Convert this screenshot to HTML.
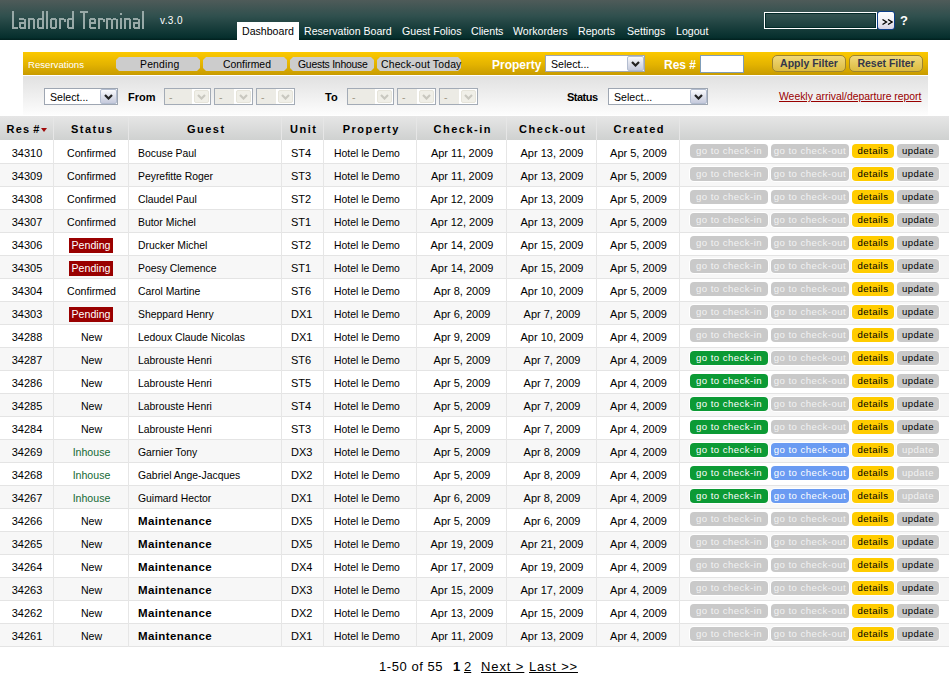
<!DOCTYPE html><html><head><meta charset="utf-8"><style>
*{margin:0;padding:0;box-sizing:border-box}
html,body{width:950px;height:681px;overflow:hidden;background:#fff;font-family:"Liberation Sans",sans-serif;font-size:11px;color:#000}
.a{position:absolute;white-space:nowrap}
#hdr{position:absolute;left:0;top:0;width:950px;height:40px;background:linear-gradient(#4f5b59 0px,#30504e 16px,#143a38 30px,#052e2c 38px,#022321 39px,#022321 40px)}
#logo{position:absolute;left:11px;top:7px;font-size:25px;color:#98a8a6;transform:scaleX(0.68);transform-origin:0 0;letter-spacing:0px}
#ver{position:absolute;left:160px;top:15px;font-size:10px;letter-spacing:0.4px;color:#fff}
.nav{position:absolute;top:24px;font-size:10.6px;color:#fff;line-height:14px}
#tab{position:absolute;left:237px;top:22px;width:62px;height:18px;background:#fff}
#srch{position:absolute;left:764px;top:12px;width:113px;height:17px;border:1px solid #fff;box-shadow:inset 0 0 0 1px #022a28}
#go{position:absolute;left:877px;top:11px;width:18px;height:19px;border:1px solid #0b3d8a;border-radius:3px;background:linear-gradient(#fff,#f4f4f8 40%,#d6d2e4);font-size:10px;font-weight:bold;text-align:center;line-height:20px;color:#000;letter-spacing:0px;text-indent:1px}
#q{position:absolute;left:900px;top:13px;font-size:13px;font-weight:bold;color:#fff}
#ybar{position:absolute;left:23px;top:52px;width:905px;height:23px;background:linear-gradient(#fcc900,#e3b300 55%,#c89b00)}
#fbar{position:absolute;left:23px;top:76px;width:905px;height:39px;background:linear-gradient(#e1e1e1,#fdfdfd)}
.yb{position:absolute;top:57px;height:14px;background:#cccccc;color:#000;font-size:10px;line-height:14px;text-align:center;letter-spacing:0.6px;clip-path:polygon(3px 0,calc(100% - 3px) 0,100% 3px,100% calc(100% - 3px),calc(100% - 3px) 100%,3px 100%,0 calc(100% - 3px),0 3px)}
.ybt{top:58px;font-size:10.4px;line-height:14px;color:#000}
.lbl{position:absolute;font-weight:bold;color:#fff;font-size:12px}
.fb{position:absolute;top:55px;height:17px;border:1px solid #9c8430;border-radius:5px;background:linear-gradient(#f0d87a,#dcbc40);color:#34374a;font-weight:bold;font-size:10.5px;text-align:center;line-height:15px}
.sel{position:absolute;height:17px;border:1px solid #9ea6b2;background:#fff;font-size:10.6px;line-height:17px;padding-left:5px;color:#000}
.sel i{position:absolute;right:0px;top:0px;width:17px;height:15px;border:1px solid #b3bdd0;border-radius:2px;background:linear-gradient(#fbfbfd,#e6e8f0 35%,#c5cadc)}
.sel i svg{position:absolute;left:3px;top:4px}
.sel.d{border-color:#a3abb6;background:linear-gradient(90deg,#ecebe5 0,#ecebe5 calc(100% - 18px),#fff calc(100% - 18px));color:#a09a88;padding-left:4px}
.sel.d i{right:1px;top:1px;width:15px;height:13px;border:1px solid #e6e4da;border-radius:2px;background:#f0efe8}
.sel.d i svg{left:2px;top:3px}
.bl{position:absolute;font-weight:bold;font-size:11px;color:#000}
#thead{position:absolute;left:0;top:116px;width:949px;height:24px;background:linear-gradient(#e6e6e6,#cfd1d0)}
.th{position:absolute;top:122px;font-weight:bold;font-size:11px;text-align:center;letter-spacing:1.5px;line-height:14px;text-indent:1.5px}
.row{position:absolute;left:0;width:949px;height:23px;border-bottom:1px solid #e4e4e4}
.row.o{background:#f7f7f7}
.vd{position:absolute;width:1px;background:#e6e6e6}
.td{position:absolute;line-height:14px}
.c{text-align:center}
.pend{background:#990000;color:#fff;width:44px;height:15px;text-align:center;line-height:15px;font-size:10.6px}
.nm{font-size:10.4px;margin-top:1px}
.st{font-size:10.6px}
.inh{color:#156a35}
.btn{position:absolute;height:14px;line-height:14px;font-size:9.6px;text-align:center;letter-spacing:0.45px;border-radius:4px;white-space:nowrap;overflow:hidden;box-shadow:0 0 0 1px #fff}
.bg{background:#c9c9c9;color:#f2f2f2}
.bG{background:#0c9a35;color:#fff}
.bB{background:#6a9bf2;color:#fff}
.bY{background:#ffcc00;color:#000}
.bU{background:#c9c9c9;color:#000}
.pg{top:659px;text-underline-offset:1px;font-size:13px;line-height:16px}
</style></head><body>
<div id="hdr"></div>
<svg class="a" style="left:0;top:0" width="150" height="40" shape-rendering="crispEdges"><g fill="#98a9a7"><rect x="12" y="11" width="2" height="18"/><rect x="12" y="27" width="6" height="2"/><rect x="19" y="18" width="5" height="2"/><rect x="24" y="19" width="2" height="10"/><rect x="19" y="22" width="5" height="2"/><rect x="19" y="24" width="2" height="4"/><rect x="20" y="27" width="4" height="2"/><rect x="28" y="18" width="2" height="11"/><rect x="30" y="18" width="4" height="2"/><rect x="33" y="19" width="2" height="10"/><rect x="42" y="11" width="2" height="18"/><rect x="37" y="19" width="2" height="9"/><rect x="38" y="18" width="4" height="2"/><rect x="38" y="27" width="4" height="2"/><rect x="46" y="11" width="2" height="18"/><rect x="50" y="19" width="2" height="9"/><rect x="55" y="19" width="2" height="9"/><rect x="51" y="18" width="5" height="2"/><rect x="51" y="27" width="5" height="2"/><rect x="59" y="18" width="2" height="11"/><rect x="61" y="18" width="3" height="2"/><rect x="64" y="19" width="2" height="3"/><rect x="72" y="11" width="2" height="18"/><rect x="67" y="19" width="2" height="9"/><rect x="68" y="18" width="4" height="2"/><rect x="68" y="27" width="4" height="2"/><rect x="80" y="11" width="8" height="2"/><rect x="83" y="11" width="2" height="18"/><rect x="89" y="19" width="2" height="9"/><rect x="90" y="18" width="5" height="2"/><rect x="94" y="19" width="2" height="5"/><rect x="90" y="22" width="5" height="2"/><rect x="90" y="27" width="6" height="2"/><rect x="98" y="18" width="2" height="11"/><rect x="100" y="18" width="3" height="2"/><rect x="103" y="19" width="2" height="3"/><rect x="106" y="18" width="2" height="11"/><rect x="108" y="18" width="3" height="2"/><rect x="111" y="19" width="2" height="10"/><rect x="113" y="18" width="3" height="2"/><rect x="116" y="19" width="2" height="10"/><rect x="120" y="13" width="2" height="2"/><rect x="120" y="18" width="2" height="11"/><rect x="124" y="18" width="2" height="11"/><rect x="126" y="18" width="4" height="2"/><rect x="129" y="19" width="2" height="10"/><rect x="133" y="18" width="5" height="2"/><rect x="138" y="19" width="2" height="10"/><rect x="133" y="22" width="5" height="2"/><rect x="133" y="24" width="2" height="4"/><rect x="134" y="27" width="4" height="2"/><rect x="142" y="11" width="2" height="18"/></g></svg>
<div id="ver" class="a">v.3.0</div>
<div id="tab"></div>
<div class="nav a" style="left:242px;color:#000">Dashboard</div>
<div class="nav a" style="left:304px;color:#fff">Reservation Board</div>
<div class="nav a" style="left:402px;color:#fff">Guest Folios</div>
<div class="nav a" style="left:471px;color:#fff">Clients</div>
<div class="nav a" style="left:513px;color:#fff">Workorders</div>
<div class="nav a" style="left:578px;color:#fff">Reports</div>
<div class="nav a" style="left:627px;color:#fff">Settings</div>
<div class="nav a" style="left:676px;color:#fff">Logout</div>
<div id="srch"></div><div id="go"><svg style="position:absolute;left:4px;top:7px" width="11" height="6" viewBox="0 0 11 6"><path d="M0.5 0.5 L4.5 3 L0.5 5.5 M6 0.5 L10 3 L6 5.5" fill="none" stroke="#000" stroke-width="1.3"/></svg></div><div id="q" class="a">?</div>
<div id="ybar"></div><div id="fbar"></div>
<div class="a" style="left:28px;top:59px;color:#fff;font-size:9.6px">Reservations</div>
<div class="yb" style="left:116px;width:84px"></div>
<div class="a ybt" style="left:140px;letter-spacing:0.2px">Pending</div>
<div class="yb" style="left:203px;width:84px"></div>
<div class="a ybt" style="left:223px;letter-spacing:0px">Confirmed</div>
<div class="yb" style="left:290px;width:84px"></div>
<div class="a ybt" style="left:298px;letter-spacing:-0.23px">Guests Inhouse</div>
<div class="yb" style="left:377px;width:84px"></div>
<div class="a ybt" style="left:381px;letter-spacing:0.18px">Check-out Today</div>
<div class="lbl a" style="left:492px;top:58px">Property</div>
<div class="sel" style="left:545px;top:55px;width:100px">Select...<i><svg width="9" height="6" viewBox="0 0 9 6"><path d="M1 1 L4.5 4.5 L8 1" fill="none" stroke="#222" stroke-width="2.2"/></svg></i></div>
<div class="lbl a" style="left:664px;top:58px">Res #</div>
<div class="a" style="left:700px;top:55px;width:44px;height:18px;background:#fff;border:1px solid #7f9db9"></div>
<div class="fb" style="left:772px;width:74px">Apply Filter</div>
<div class="fb" style="left:849px;width:74px">Reset Filter</div>
<div class="sel" style="left:44px;top:88px;width:74px">Select...<i><svg width="9" height="6" viewBox="0 0 9 6"><path d="M1 1 L4.5 4.5 L8 1" fill="none" stroke="#222" stroke-width="2.2"/></svg></i></div>
<div class="bl a" style="left:128px;top:91px">From</div>
<div class="sel d" style="left:164px;top:88px;width:47px">-<i><svg width="9" height="6" viewBox="0 0 9 6"><path d="M1 1 L4.5 4.5 L8 1" fill="none" stroke="#c9c8c0" stroke-width="2.2"/></svg></i></div>
<div class="sel d" style="left:214px;top:88px;width:39px">-<i><svg width="9" height="6" viewBox="0 0 9 6"><path d="M1 1 L4.5 4.5 L8 1" fill="none" stroke="#c9c8c0" stroke-width="2.2"/></svg></i></div>
<div class="sel d" style="left:256px;top:88px;width:39px">-<i><svg width="9" height="6" viewBox="0 0 9 6"><path d="M1 1 L4.5 4.5 L8 1" fill="none" stroke="#c9c8c0" stroke-width="2.2"/></svg></i></div>
<div class="sel d" style="left:347px;top:88px;width:47px">-<i><svg width="9" height="6" viewBox="0 0 9 6"><path d="M1 1 L4.5 4.5 L8 1" fill="none" stroke="#c9c8c0" stroke-width="2.2"/></svg></i></div>
<div class="sel d" style="left:397px;top:88px;width:39px">-<i><svg width="9" height="6" viewBox="0 0 9 6"><path d="M1 1 L4.5 4.5 L8 1" fill="none" stroke="#c9c8c0" stroke-width="2.2"/></svg></i></div>
<div class="sel d" style="left:439px;top:88px;width:39px">-<i><svg width="9" height="6" viewBox="0 0 9 6"><path d="M1 1 L4.5 4.5 L8 1" fill="none" stroke="#c9c8c0" stroke-width="2.2"/></svg></i></div>
<div class="bl a" style="left:325px;top:91px">To</div>
<div class="bl a" style="left:567px;top:91px;letter-spacing:-0.5px">Status</div>
<div class="sel" style="left:608px;top:88px;width:100px">Select...<i><svg width="9" height="6" viewBox="0 0 9 6"><path d="M1 1 L4.5 4.5 L8 1" fill="none" stroke="#222" stroke-width="2.2"/></svg></i></div>
<div class="a" style="left:779px;top:91px;font-size:10.4px;color:#990000;text-decoration:underline">Weekly arrival/departure report</div>
<div id="thead"></div>
<div class="th a" style="left:5px;letter-spacing:1.2px">Res<span style="letter-spacing:0">&nbsp;</span>#</div>
<div class="a" style="left:41px;top:128px;width:0;height:0;border-left:3.5px solid transparent;border-right:3.5px solid transparent;border-top:4.5px solid #a00a0a"></div>
<div class="th" style="left:54px;width:75px">Status</div>
<div class="th" style="left:129px;width:153px">Guest</div>
<div class="th" style="left:282px;width:42px">Unit</div>
<div class="th" style="left:324px;width:93px">Property</div>
<div class="th" style="left:417px;width:90px">Check-in</div>
<div class="th" style="left:507px;width:90px">Check-out</div>
<div class="th" style="left:597px;width:83px">Created</div>
<div class="row" style="top:141px"></div>
<div class="row o" style="top:164px"></div>
<div class="row" style="top:187px"></div>
<div class="row o" style="top:210px"></div>
<div class="row" style="top:233px"></div>
<div class="row o" style="top:256px"></div>
<div class="row" style="top:279px"></div>
<div class="row o" style="top:302px"></div>
<div class="row" style="top:325px"></div>
<div class="row o" style="top:348px"></div>
<div class="row" style="top:371px"></div>
<div class="row o" style="top:394px"></div>
<div class="row" style="top:417px"></div>
<div class="row o" style="top:440px"></div>
<div class="row" style="top:463px"></div>
<div class="row o" style="top:486px"></div>
<div class="row" style="top:509px"></div>
<div class="row o" style="top:532px"></div>
<div class="row" style="top:555px"></div>
<div class="row o" style="top:578px"></div>
<div class="row" style="top:601px"></div>
<div class="row o" style="top:624px"></div>
<div class="vd" style="left:53px;top:116px;height:531px"></div>
<div class="vd" style="left:128px;top:116px;height:531px"></div>
<div class="vd" style="left:281px;top:116px;height:531px"></div>
<div class="vd" style="left:323px;top:116px;height:531px"></div>
<div class="vd" style="left:416px;top:116px;height:531px"></div>
<div class="vd" style="left:506px;top:116px;height:531px"></div>
<div class="vd" style="left:596px;top:116px;height:531px"></div>
<div class="vd" style="left:679px;top:116px;height:531px"></div>
<div class="td c" style="left:0;top:146px;width:54px">34310</div>
<div class="td c st" style="left:54px;top:146px;width:75px">Confirmed</div>
<div class="td a nm" style="left:138px;top:146px">Bocuse Paul</div>
<div class="td a" style="left:291px;top:146px">ST4</div>
<div class="td a nm" style="left:334px;top:146px">Hotel le Demo</div>
<div class="td c" style="left:417px;top:146px;width:90px">Apr 11, 2009</div>
<div class="td c" style="left:507px;top:146px;width:90px">Apr 13, 2009</div>
<div class="td c" style="left:597px;top:146px;width:83px">Apr 5, 2009</div>
<div class="btn bg" style="left:690px;top:144px;width:78px">go to check-in</div>
<div class="btn bg" style="left:771px;top:144px;width:78px">go to check-out</div>
<div class="btn bY" style="left:852px;top:144px;width:42px">details</div>
<div class="btn bU" style="left:897px;top:144px;width:42px">update</div>
<div class="td c" style="left:0;top:169px;width:54px">34309</div>
<div class="td c st" style="left:54px;top:169px;width:75px">Confirmed</div>
<div class="td a nm" style="left:138px;top:169px">Peyrefitte Roger</div>
<div class="td a" style="left:291px;top:169px">ST3</div>
<div class="td a nm" style="left:334px;top:169px">Hotel le Demo</div>
<div class="td c" style="left:417px;top:169px;width:90px">Apr 11, 2009</div>
<div class="td c" style="left:507px;top:169px;width:90px">Apr 13, 2009</div>
<div class="td c" style="left:597px;top:169px;width:83px">Apr 5, 2009</div>
<div class="btn bg" style="left:690px;top:167px;width:78px">go to check-in</div>
<div class="btn bg" style="left:771px;top:167px;width:78px">go to check-out</div>
<div class="btn bY" style="left:852px;top:167px;width:42px">details</div>
<div class="btn bU" style="left:897px;top:167px;width:42px">update</div>
<div class="td c" style="left:0;top:192px;width:54px">34308</div>
<div class="td c st" style="left:54px;top:192px;width:75px">Confirmed</div>
<div class="td a nm" style="left:138px;top:192px">Claudel Paul</div>
<div class="td a" style="left:291px;top:192px">ST2</div>
<div class="td a nm" style="left:334px;top:192px">Hotel le Demo</div>
<div class="td c" style="left:417px;top:192px;width:90px">Apr 12, 2009</div>
<div class="td c" style="left:507px;top:192px;width:90px">Apr 13, 2009</div>
<div class="td c" style="left:597px;top:192px;width:83px">Apr 5, 2009</div>
<div class="btn bg" style="left:690px;top:190px;width:78px">go to check-in</div>
<div class="btn bg" style="left:771px;top:190px;width:78px">go to check-out</div>
<div class="btn bY" style="left:852px;top:190px;width:42px">details</div>
<div class="btn bU" style="left:897px;top:190px;width:42px">update</div>
<div class="td c" style="left:0;top:215px;width:54px">34307</div>
<div class="td c st" style="left:54px;top:215px;width:75px">Confirmed</div>
<div class="td a nm" style="left:138px;top:215px">Butor Michel</div>
<div class="td a" style="left:291px;top:215px">ST1</div>
<div class="td a nm" style="left:334px;top:215px">Hotel le Demo</div>
<div class="td c" style="left:417px;top:215px;width:90px">Apr 12, 2009</div>
<div class="td c" style="left:507px;top:215px;width:90px">Apr 13, 2009</div>
<div class="td c" style="left:597px;top:215px;width:83px">Apr 5, 2009</div>
<div class="btn bg" style="left:690px;top:213px;width:78px">go to check-in</div>
<div class="btn bg" style="left:771px;top:213px;width:78px">go to check-out</div>
<div class="btn bY" style="left:852px;top:213px;width:42px">details</div>
<div class="btn bU" style="left:897px;top:213px;width:42px">update</div>
<div class="td c" style="left:0;top:238px;width:54px">34306</div>
<div class="a pend" style="left:69px;top:238px">Pending</div>
<div class="td a nm" style="left:138px;top:238px">Drucker Michel</div>
<div class="td a" style="left:291px;top:238px">ST2</div>
<div class="td a nm" style="left:334px;top:238px">Hotel le Demo</div>
<div class="td c" style="left:417px;top:238px;width:90px">Apr 14, 2009</div>
<div class="td c" style="left:507px;top:238px;width:90px">Apr 15, 2009</div>
<div class="td c" style="left:597px;top:238px;width:83px">Apr 5, 2009</div>
<div class="btn bg" style="left:690px;top:236px;width:78px">go to check-in</div>
<div class="btn bg" style="left:771px;top:236px;width:78px">go to check-out</div>
<div class="btn bY" style="left:852px;top:236px;width:42px">details</div>
<div class="btn bU" style="left:897px;top:236px;width:42px">update</div>
<div class="td c" style="left:0;top:261px;width:54px">34305</div>
<div class="a pend" style="left:69px;top:261px">Pending</div>
<div class="td a nm" style="left:138px;top:261px">Poesy Clemence</div>
<div class="td a" style="left:291px;top:261px">ST1</div>
<div class="td a nm" style="left:334px;top:261px">Hotel le Demo</div>
<div class="td c" style="left:417px;top:261px;width:90px">Apr 14, 2009</div>
<div class="td c" style="left:507px;top:261px;width:90px">Apr 15, 2009</div>
<div class="td c" style="left:597px;top:261px;width:83px">Apr 5, 2009</div>
<div class="btn bg" style="left:690px;top:259px;width:78px">go to check-in</div>
<div class="btn bg" style="left:771px;top:259px;width:78px">go to check-out</div>
<div class="btn bY" style="left:852px;top:259px;width:42px">details</div>
<div class="btn bU" style="left:897px;top:259px;width:42px">update</div>
<div class="td c" style="left:0;top:284px;width:54px">34304</div>
<div class="td c st" style="left:54px;top:284px;width:75px">Confirmed</div>
<div class="td a nm" style="left:138px;top:284px">Carol Martine</div>
<div class="td a" style="left:291px;top:284px">ST6</div>
<div class="td a nm" style="left:334px;top:284px">Hotel le Demo</div>
<div class="td c" style="left:417px;top:284px;width:90px">Apr 8, 2009</div>
<div class="td c" style="left:507px;top:284px;width:90px">Apr 10, 2009</div>
<div class="td c" style="left:597px;top:284px;width:83px">Apr 5, 2009</div>
<div class="btn bg" style="left:690px;top:282px;width:78px">go to check-in</div>
<div class="btn bg" style="left:771px;top:282px;width:78px">go to check-out</div>
<div class="btn bY" style="left:852px;top:282px;width:42px">details</div>
<div class="btn bU" style="left:897px;top:282px;width:42px">update</div>
<div class="td c" style="left:0;top:307px;width:54px">34303</div>
<div class="a pend" style="left:69px;top:307px">Pending</div>
<div class="td a nm" style="left:138px;top:307px">Sheppard Henry</div>
<div class="td a" style="left:291px;top:307px">DX1</div>
<div class="td a nm" style="left:334px;top:307px">Hotel le Demo</div>
<div class="td c" style="left:417px;top:307px;width:90px">Apr 6, 2009</div>
<div class="td c" style="left:507px;top:307px;width:90px">Apr 7, 2009</div>
<div class="td c" style="left:597px;top:307px;width:83px">Apr 5, 2009</div>
<div class="btn bg" style="left:690px;top:305px;width:78px">go to check-in</div>
<div class="btn bg" style="left:771px;top:305px;width:78px">go to check-out</div>
<div class="btn bY" style="left:852px;top:305px;width:42px">details</div>
<div class="btn bU" style="left:897px;top:305px;width:42px">update</div>
<div class="td c" style="left:0;top:330px;width:54px">34288</div>
<div class="td c st" style="left:54px;top:330px;width:75px">New</div>
<div class="td a nm" style="left:138px;top:330px">Ledoux Claude Nicolas</div>
<div class="td a" style="left:291px;top:330px">DX1</div>
<div class="td a nm" style="left:334px;top:330px">Hotel le Demo</div>
<div class="td c" style="left:417px;top:330px;width:90px">Apr 9, 2009</div>
<div class="td c" style="left:507px;top:330px;width:90px">Apr 10, 2009</div>
<div class="td c" style="left:597px;top:330px;width:83px">Apr 4, 2009</div>
<div class="btn bg" style="left:690px;top:328px;width:78px">go to check-in</div>
<div class="btn bg" style="left:771px;top:328px;width:78px">go to check-out</div>
<div class="btn bY" style="left:852px;top:328px;width:42px">details</div>
<div class="btn bU" style="left:897px;top:328px;width:42px">update</div>
<div class="td c" style="left:0;top:353px;width:54px">34287</div>
<div class="td c st" style="left:54px;top:353px;width:75px">New</div>
<div class="td a nm" style="left:138px;top:353px">Labrouste Henri</div>
<div class="td a" style="left:291px;top:353px">ST6</div>
<div class="td a nm" style="left:334px;top:353px">Hotel le Demo</div>
<div class="td c" style="left:417px;top:353px;width:90px">Apr 5, 2009</div>
<div class="td c" style="left:507px;top:353px;width:90px">Apr 7, 2009</div>
<div class="td c" style="left:597px;top:353px;width:83px">Apr 4, 2009</div>
<div class="btn bG" style="left:690px;top:351px;width:78px">go to check-in</div>
<div class="btn bg" style="left:771px;top:351px;width:78px">go to check-out</div>
<div class="btn bY" style="left:852px;top:351px;width:42px">details</div>
<div class="btn bU" style="left:897px;top:351px;width:42px">update</div>
<div class="td c" style="left:0;top:376px;width:54px">34286</div>
<div class="td c st" style="left:54px;top:376px;width:75px">New</div>
<div class="td a nm" style="left:138px;top:376px">Labrouste Henri</div>
<div class="td a" style="left:291px;top:376px">ST5</div>
<div class="td a nm" style="left:334px;top:376px">Hotel le Demo</div>
<div class="td c" style="left:417px;top:376px;width:90px">Apr 5, 2009</div>
<div class="td c" style="left:507px;top:376px;width:90px">Apr 7, 2009</div>
<div class="td c" style="left:597px;top:376px;width:83px">Apr 4, 2009</div>
<div class="btn bG" style="left:690px;top:374px;width:78px">go to check-in</div>
<div class="btn bg" style="left:771px;top:374px;width:78px">go to check-out</div>
<div class="btn bY" style="left:852px;top:374px;width:42px">details</div>
<div class="btn bU" style="left:897px;top:374px;width:42px">update</div>
<div class="td c" style="left:0;top:399px;width:54px">34285</div>
<div class="td c st" style="left:54px;top:399px;width:75px">New</div>
<div class="td a nm" style="left:138px;top:399px">Labrouste Henri</div>
<div class="td a" style="left:291px;top:399px">ST4</div>
<div class="td a nm" style="left:334px;top:399px">Hotel le Demo</div>
<div class="td c" style="left:417px;top:399px;width:90px">Apr 5, 2009</div>
<div class="td c" style="left:507px;top:399px;width:90px">Apr 7, 2009</div>
<div class="td c" style="left:597px;top:399px;width:83px">Apr 4, 2009</div>
<div class="btn bG" style="left:690px;top:397px;width:78px">go to check-in</div>
<div class="btn bg" style="left:771px;top:397px;width:78px">go to check-out</div>
<div class="btn bY" style="left:852px;top:397px;width:42px">details</div>
<div class="btn bU" style="left:897px;top:397px;width:42px">update</div>
<div class="td c" style="left:0;top:422px;width:54px">34284</div>
<div class="td c st" style="left:54px;top:422px;width:75px">New</div>
<div class="td a nm" style="left:138px;top:422px">Labrouste Henri</div>
<div class="td a" style="left:291px;top:422px">ST3</div>
<div class="td a nm" style="left:334px;top:422px">Hotel le Demo</div>
<div class="td c" style="left:417px;top:422px;width:90px">Apr 5, 2009</div>
<div class="td c" style="left:507px;top:422px;width:90px">Apr 7, 2009</div>
<div class="td c" style="left:597px;top:422px;width:83px">Apr 4, 2009</div>
<div class="btn bG" style="left:690px;top:420px;width:78px">go to check-in</div>
<div class="btn bg" style="left:771px;top:420px;width:78px">go to check-out</div>
<div class="btn bY" style="left:852px;top:420px;width:42px">details</div>
<div class="btn bU" style="left:897px;top:420px;width:42px">update</div>
<div class="td c" style="left:0;top:445px;width:54px">34269</div>
<div class="td c inh st" style="left:54px;top:445px;width:75px">Inhouse</div>
<div class="td a nm" style="left:138px;top:445px">Garnier Tony</div>
<div class="td a" style="left:291px;top:445px">DX3</div>
<div class="td a nm" style="left:334px;top:445px">Hotel le Demo</div>
<div class="td c" style="left:417px;top:445px;width:90px">Apr 5, 2009</div>
<div class="td c" style="left:507px;top:445px;width:90px">Apr 8, 2009</div>
<div class="td c" style="left:597px;top:445px;width:83px">Apr 4, 2009</div>
<div class="btn bG" style="left:690px;top:443px;width:78px">go to check-in</div>
<div class="btn bB" style="left:771px;top:443px;width:78px">go to check-out</div>
<div class="btn bY" style="left:852px;top:443px;width:42px">details</div>
<div class="btn bg" style="left:897px;top:443px;width:42px">update</div>
<div class="td c" style="left:0;top:468px;width:54px">34268</div>
<div class="td c inh st" style="left:54px;top:468px;width:75px">Inhouse</div>
<div class="td a nm" style="left:138px;top:468px">Gabriel Ange-Jacques</div>
<div class="td a" style="left:291px;top:468px">DX2</div>
<div class="td a nm" style="left:334px;top:468px">Hotel le Demo</div>
<div class="td c" style="left:417px;top:468px;width:90px">Apr 5, 2009</div>
<div class="td c" style="left:507px;top:468px;width:90px">Apr 8, 2009</div>
<div class="td c" style="left:597px;top:468px;width:83px">Apr 4, 2009</div>
<div class="btn bG" style="left:690px;top:466px;width:78px">go to check-in</div>
<div class="btn bB" style="left:771px;top:466px;width:78px">go to check-out</div>
<div class="btn bY" style="left:852px;top:466px;width:42px">details</div>
<div class="btn bg" style="left:897px;top:466px;width:42px">update</div>
<div class="td c" style="left:0;top:491px;width:54px">34267</div>
<div class="td c inh st" style="left:54px;top:491px;width:75px">Inhouse</div>
<div class="td a nm" style="left:138px;top:491px">Guimard Hector</div>
<div class="td a" style="left:291px;top:491px">DX1</div>
<div class="td a nm" style="left:334px;top:491px">Hotel le Demo</div>
<div class="td c" style="left:417px;top:491px;width:90px">Apr 6, 2009</div>
<div class="td c" style="left:507px;top:491px;width:90px">Apr 8, 2009</div>
<div class="td c" style="left:597px;top:491px;width:83px">Apr 4, 2009</div>
<div class="btn bG" style="left:690px;top:489px;width:78px">go to check-in</div>
<div class="btn bB" style="left:771px;top:489px;width:78px">go to check-out</div>
<div class="btn bY" style="left:852px;top:489px;width:42px">details</div>
<div class="btn bg" style="left:897px;top:489px;width:42px">update</div>
<div class="td c" style="left:0;top:514px;width:54px">34266</div>
<div class="td c st" style="left:54px;top:514px;width:75px">New</div>
<div class="td a nm" style="left:138px;top:514px"><b style="letter-spacing:0.4px;font-size:11.5px;position:relative;top:-1px">Maintenance</b></div>
<div class="td a" style="left:291px;top:514px">DX5</div>
<div class="td a nm" style="left:334px;top:514px">Hotel le Demo</div>
<div class="td c" style="left:417px;top:514px;width:90px">Apr 5, 2009</div>
<div class="td c" style="left:507px;top:514px;width:90px">Apr 6, 2009</div>
<div class="td c" style="left:597px;top:514px;width:83px">Apr 4, 2009</div>
<div class="btn bg" style="left:690px;top:512px;width:78px">go to check-in</div>
<div class="btn bg" style="left:771px;top:512px;width:78px">go to check-out</div>
<div class="btn bY" style="left:852px;top:512px;width:42px">details</div>
<div class="btn bU" style="left:897px;top:512px;width:42px">update</div>
<div class="td c" style="left:0;top:537px;width:54px">34265</div>
<div class="td c st" style="left:54px;top:537px;width:75px">New</div>
<div class="td a nm" style="left:138px;top:537px"><b style="letter-spacing:0.4px;font-size:11.5px;position:relative;top:-1px">Maintenance</b></div>
<div class="td a" style="left:291px;top:537px">DX5</div>
<div class="td a nm" style="left:334px;top:537px">Hotel le Demo</div>
<div class="td c" style="left:417px;top:537px;width:90px">Apr 19, 2009</div>
<div class="td c" style="left:507px;top:537px;width:90px">Apr 21, 2009</div>
<div class="td c" style="left:597px;top:537px;width:83px">Apr 4, 2009</div>
<div class="btn bg" style="left:690px;top:535px;width:78px">go to check-in</div>
<div class="btn bg" style="left:771px;top:535px;width:78px">go to check-out</div>
<div class="btn bY" style="left:852px;top:535px;width:42px">details</div>
<div class="btn bU" style="left:897px;top:535px;width:42px">update</div>
<div class="td c" style="left:0;top:560px;width:54px">34264</div>
<div class="td c st" style="left:54px;top:560px;width:75px">New</div>
<div class="td a nm" style="left:138px;top:560px"><b style="letter-spacing:0.4px;font-size:11.5px;position:relative;top:-1px">Maintenance</b></div>
<div class="td a" style="left:291px;top:560px">DX4</div>
<div class="td a nm" style="left:334px;top:560px">Hotel le Demo</div>
<div class="td c" style="left:417px;top:560px;width:90px">Apr 17, 2009</div>
<div class="td c" style="left:507px;top:560px;width:90px">Apr 19, 2009</div>
<div class="td c" style="left:597px;top:560px;width:83px">Apr 4, 2009</div>
<div class="btn bg" style="left:690px;top:558px;width:78px">go to check-in</div>
<div class="btn bg" style="left:771px;top:558px;width:78px">go to check-out</div>
<div class="btn bY" style="left:852px;top:558px;width:42px">details</div>
<div class="btn bU" style="left:897px;top:558px;width:42px">update</div>
<div class="td c" style="left:0;top:583px;width:54px">34263</div>
<div class="td c st" style="left:54px;top:583px;width:75px">New</div>
<div class="td a nm" style="left:138px;top:583px"><b style="letter-spacing:0.4px;font-size:11.5px;position:relative;top:-1px">Maintenance</b></div>
<div class="td a" style="left:291px;top:583px">DX3</div>
<div class="td a nm" style="left:334px;top:583px">Hotel le Demo</div>
<div class="td c" style="left:417px;top:583px;width:90px">Apr 15, 2009</div>
<div class="td c" style="left:507px;top:583px;width:90px">Apr 17, 2009</div>
<div class="td c" style="left:597px;top:583px;width:83px">Apr 4, 2009</div>
<div class="btn bg" style="left:690px;top:581px;width:78px">go to check-in</div>
<div class="btn bg" style="left:771px;top:581px;width:78px">go to check-out</div>
<div class="btn bY" style="left:852px;top:581px;width:42px">details</div>
<div class="btn bU" style="left:897px;top:581px;width:42px">update</div>
<div class="td c" style="left:0;top:606px;width:54px">34262</div>
<div class="td c st" style="left:54px;top:606px;width:75px">New</div>
<div class="td a nm" style="left:138px;top:606px"><b style="letter-spacing:0.4px;font-size:11.5px;position:relative;top:-1px">Maintenance</b></div>
<div class="td a" style="left:291px;top:606px">DX2</div>
<div class="td a nm" style="left:334px;top:606px">Hotel le Demo</div>
<div class="td c" style="left:417px;top:606px;width:90px">Apr 13, 2009</div>
<div class="td c" style="left:507px;top:606px;width:90px">Apr 15, 2009</div>
<div class="td c" style="left:597px;top:606px;width:83px">Apr 4, 2009</div>
<div class="btn bg" style="left:690px;top:604px;width:78px">go to check-in</div>
<div class="btn bg" style="left:771px;top:604px;width:78px">go to check-out</div>
<div class="btn bY" style="left:852px;top:604px;width:42px">details</div>
<div class="btn bU" style="left:897px;top:604px;width:42px">update</div>
<div class="td c" style="left:0;top:629px;width:54px">34261</div>
<div class="td c st" style="left:54px;top:629px;width:75px">New</div>
<div class="td a nm" style="left:138px;top:629px"><b style="letter-spacing:0.4px;font-size:11.5px;position:relative;top:-1px">Maintenance</b></div>
<div class="td a" style="left:291px;top:629px">DX1</div>
<div class="td a nm" style="left:334px;top:629px">Hotel le Demo</div>
<div class="td c" style="left:417px;top:629px;width:90px">Apr 11, 2009</div>
<div class="td c" style="left:507px;top:629px;width:90px">Apr 13, 2009</div>
<div class="td c" style="left:597px;top:629px;width:83px">Apr 4, 2009</div>
<div class="btn bg" style="left:690px;top:627px;width:78px">go to check-in</div>
<div class="btn bg" style="left:771px;top:627px;width:78px">go to check-out</div>
<div class="btn bY" style="left:852px;top:627px;width:42px">details</div>
<div class="btn bU" style="left:897px;top:627px;width:42px">update</div>
<div class="a pg" style="left:379px;letter-spacing:0.55px">1-50 of 55</div>
<div class="a pg" style="left:453px;letter-spacing:0px"><b>1</b></div>
<div class="a pg" style="left:464px;letter-spacing:0px"><u>2</u></div>
<div class="a pg" style="left:481px;letter-spacing:0.9px"><u>Next &gt;</u></div>
<div class="a pg" style="left:529px;letter-spacing:0.8px"><u>Last &gt;&gt;</u></div>
</body></html>
